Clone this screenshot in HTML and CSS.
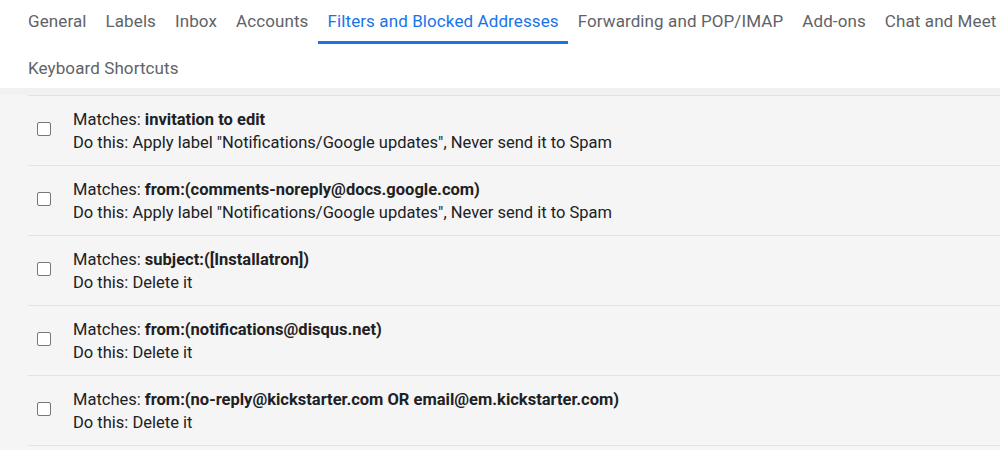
FILE: index.html
```
<!DOCTYPE html>
<html>
<head>
<meta charset="utf-8">
<title>Settings - Filters</title>
<link rel="stylesheet" href="styles.css">
</head>
<body>
<div class="header">
  <div class="tabrow">
    <span class="tab">General</span>
    <span class="tab">Labels</span>
    <span class="tab">Inbox</span>
    <span class="tab">Accounts</span>
    <span class="tab active">Filters and Blocked Addresses</span>
    <span class="tab">Forwarding and POP/IMAP</span>
    <span class="tab">Add-ons</span>
    <span class="tab">Chat and Meet</span>
  </div>
  <div class="tabrow second">
    <span class="tab">Keyboard Shortcuts</span>
  </div>
</div>
<div class="shade"></div>
<div class="filters">
  <div class="filter">
    <span class="check"></span>
    <div class="desc">
      <div>Matches: <b>invitation to edit</b></div>
      <div>Do this: Apply label "Notifications/Google updates", Never send it to Spam</div>
    </div>
  </div>
  <div class="filter">
    <span class="check"></span>
    <div class="desc">
      <div>Matches: <b>from:(comments-noreply@docs.google.com)</b></div>
      <div>Do this: Apply label "Notifications/Google updates", Never send it to Spam</div>
    </div>
  </div>
  <div class="filter">
    <span class="check"></span>
    <div class="desc">
      <div>Matches: <b>subject:([Installatron])</b></div>
      <div>Do this: Delete it</div>
    </div>
  </div>
  <div class="filter">
    <span class="check"></span>
    <div class="desc">
      <div>Matches: <b>from:(notifications@disqus.net)</b></div>
      <div>Do this: Delete it</div>
    </div>
  </div>
  <div class="filter">
    <span class="check"></span>
    <div class="desc">
      <div>Matches: <b>from:(no-reply@kickstarter.com OR email@em.kickstarter.com)</b></div>
      <div>Do this: Delete it</div>
    </div>
  </div>
  <div class="filter last"></div>
</div>
</body>
</html>
```
FILE: styles.css
```
body {margin:0;background:#f5f5f5;font-family:Roboto,"Liberation Sans",sans-serif;color:#222;overflow:hidden;}
.header {background:#fff;height:88px;padding-left:18.5px;overflow:hidden;}
.tabrow {display:flex;white-space:nowrap;height:44px;}
.tabrow.second {padding-top:3px;}
.tab {padding:0 9.5px;height:41px;line-height:43px;font-size:17px;letter-spacing:0.1px;color:#5f6368;border-bottom:3px solid transparent;}
.tab.active {color:#1a73e8;border-bottom-color:#1a73e8;}
.shade {height:7px;background:#f1f1f1;}
.filters {margin-left:28px;}
.filter {display:flex;align-items:center;height:69px;border-top:1px solid #e2e2e2;}
.check {width:12px;height:12px;border:1.5px solid #777;border-radius:2px;background:#fff;margin:0 22px 4px 9px;flex:none;}
.desc {font-size:16.5px;line-height:23px;color:#202124;padding-top:1px;}
.desc b {font-weight:bold;}
```
